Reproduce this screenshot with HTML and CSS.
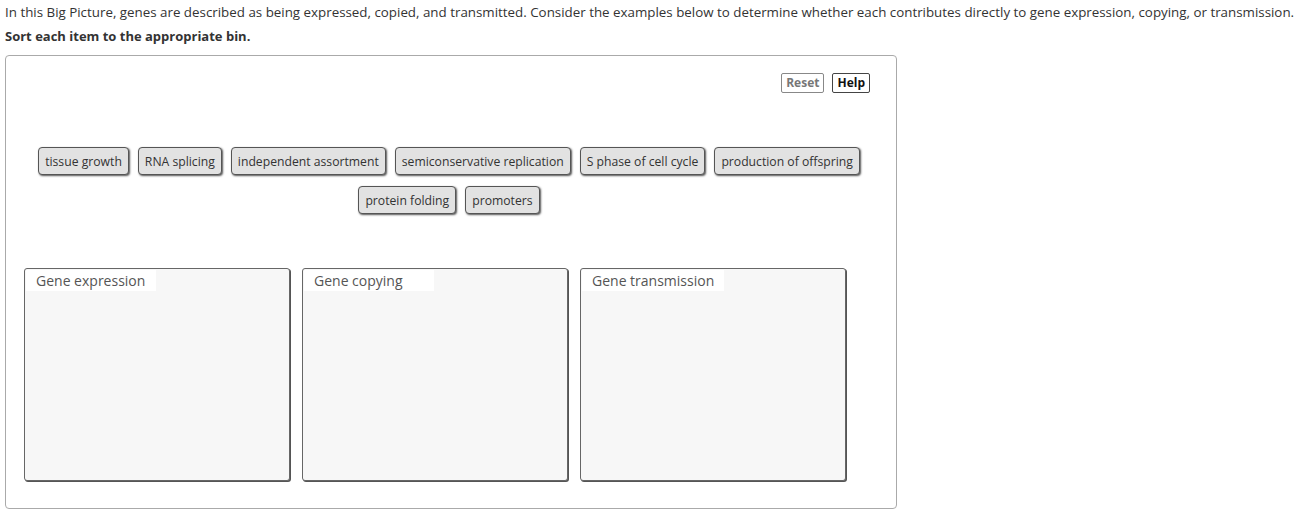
FILE: index.html
```html
<!DOCTYPE html>
<html>
<head>
<meta charset="utf-8">
<link rel="stylesheet" href="styles.css">
</head>
<body>
<p class="intro">In this Big Picture, genes are described as being expressed, copied, and transmitted. Consider the examples below to determine whether each contributes directly to gene expression, copying, or transmission.</p>
<p class="instr">Sort each item to the appropriate bin.</p>
<div class="panel">
  <div class="toolbar">
    <button class="btn btn-reset">Reset</button>
    <button class="btn btn-help">Help</button>
  </div>
  <div class="items">
    <span class="item">tissue growth</span>
    <span class="item">RNA splicing</span>
    <span class="item">independent assortment</span>
    <span class="item">semiconservative replication</span>
    <span class="item">S phase of cell cycle</span>
    <span class="item">production of offspring</span>
    <span class="item">protein folding</span>
    <span class="item">promoters</span>
  </div>
  <div class="bins">
    <div class="bin"><span class="bin-label">Gene expression</span></div>
    <div class="bin"><span class="bin-label">Gene copying</span></div>
    <div class="bin"><span class="bin-label">Gene transmission</span></div>
  </div>
</div>
</body>
</html>
```
FILE: styles.css
```css
body {
  margin: 0;
  padding: 0 5px;
  font-family: "Open Sans", "Noto Sans", sans-serif;
  color: #333;
  background: #fff;
}
.intro {
  margin: 3px 0 0;
  font-size: 13.35px;
  line-height: 18px;
}
.instr {
  margin: 6px 0 0;
  font-size: 13px;
  line-height: 18px;
  font-weight: bold;
}
.panel {
  margin-top: 10px;
  width: 890px;
  height: 452px;
  border: 1px solid #aaa;
  border-radius: 4px;
  box-sizing: content-box;
}
.toolbar {
  display: flex;
  justify-content: flex-end;
  gap: 8px;
  padding: 17px 26px 0 0;
}
.btn {
  font-family: inherit;
  font-size: 12px;
  font-weight: bold;
  line-height: 16px;
  padding: 1px 4px;
  background: #fff;
  border: 1px solid #666;
  border-radius: 2px;
}
.btn-reset { color: #777; border-color: #888; }
.btn-help { color: #111; border-color: #444; }
.items {
  display: flex;
  flex-wrap: wrap;
  justify-content: center;
  gap: 11px 9px;
  padding: 54px 14px 0 10px;
  width: 866px;
}
.item {
  font-size: 12.2px;
  line-height: 17px;
  color: #333;
  background: #e2e2e2;
  border: 1.5px solid #555;
  border-radius: 4px;
  padding: 5px 6px 4px;
  box-shadow: 1px 1px 2px #555;
}
.bins {
  display: flex;
  gap: 12px;
  padding: 54px 0 0 18px;
}
.bin {
  width: 264px;
  height: 211px;
  background: #f7f7f7;
  border: 1px solid #666;
  border-radius: 3px;
  box-shadow: 1px 1px 0 #555;
}
.bin-label {
  display: inline-block;
  background: #fff;
  font-size: 14px;
  line-height: 20px;
  padding: 1px 10px 0 10px;
  color: #555;
  margin: 1px 0 0 1px;
  min-width: 110px;
}
```
